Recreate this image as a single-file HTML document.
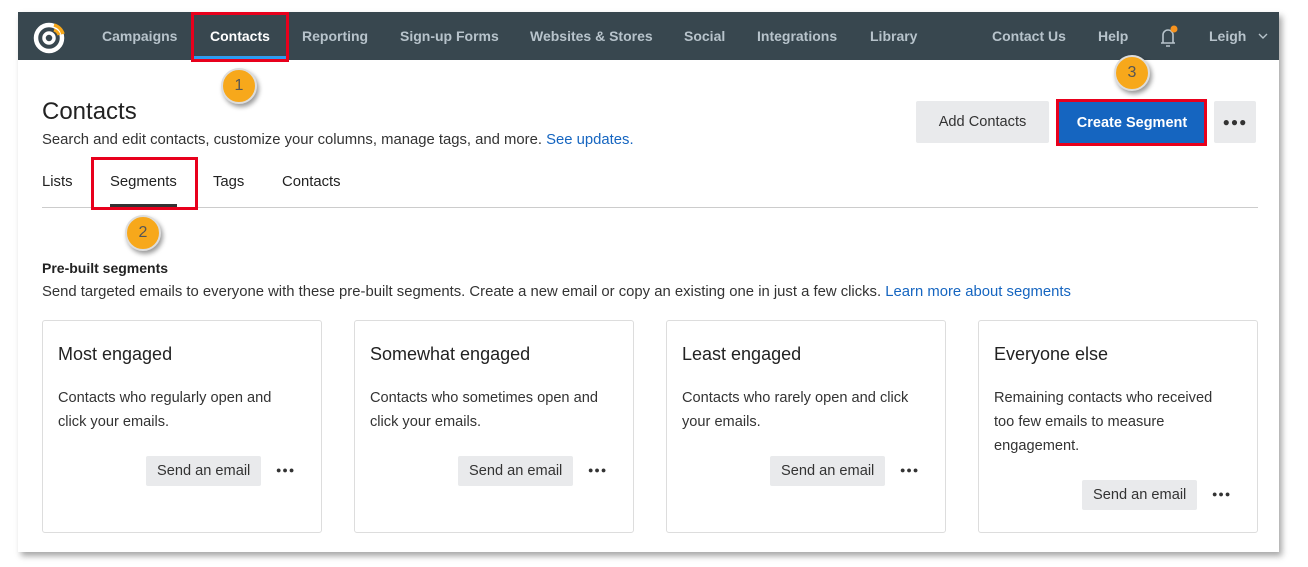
<!DOCTYPE html><html><head><style>
*{box-sizing:border-box;margin:0;padding:0}
body{width:1308px;height:567px;background:#fff;font-family:"Liberation Sans",Arial,sans-serif;position:relative;overflow:hidden;color:#222}
.page{position:absolute;left:18px;top:12px;width:1261px;height:540px;background:#fff;box-shadow:3px 4px 6px rgba(0,0,0,.35)}
.nav{position:absolute;left:0;top:0;width:1261px;height:48px;background:#38474f}
.nav span{position:absolute;top:16px;font-size:14px;color:#b7c3cb;font-weight:bold}
.abs{position:absolute}
.badge{position:absolute;width:36px;height:36px;border-radius:50%;background:#f7a81b;border:2px solid #ddd;box-shadow:2px 3px 5px rgba(0,0,0,.4);color:#555;font-size:16px;text-align:center;line-height:32px}
.red{position:absolute;border:3px solid #e8001c}
.card{position:absolute;top:308px;width:280px;height:213px;border:1px solid #ddd;border-radius:3px}
.card h3{position:absolute;left:15px;top:23px;font-size:18px;font-weight:normal;color:#222}
.card p{position:absolute;left:15px;top:65px;width:240px;font-size:14.6px;line-height:24px;color:#333}
.btn{position:absolute;background:#e9eaec;font-size:14.6px;color:#333;padding:0 11px;height:30px;line-height:30px;border-radius:2px}
.dots{position:absolute;font-size:9px;font-weight:bold;color:#333;letter-spacing:1px}
.t{font-size:14.85px}
</style></head><body>
<div class="page">
<div class="nav">
<svg class="abs" style="left:15px;top:8px" width="36" height="34" viewBox="0 0 36 34"><circle cx="16" cy="18" r="13" fill="none" stroke="#fff" stroke-width="4.5"/><circle cx="16" cy="18" r="5" fill="none" stroke="#fff" stroke-width="3.5"/><path d="M21 5a13 13 0 0 1 9 9" stroke="#f7a81b" stroke-width="3.5" fill="none"/><path d="M21 10a8 8 0 0 1 5 5" stroke="#f7a81b" stroke-width="3" fill="none"/></svg>
<span style="left:84px">Campaigns</span>
<span style="left:192px;color:#fff">Contacts</span>
<div class="abs" style="left:176px;top:44px;width:92px;height:4px;background:#2d9cf0"></div>
<span style="left:284px">Reporting</span>
<span style="left:382px">Sign-up Forms</span>
<span style="left:512px">Websites &amp; Stores</span>
<span style="left:666px">Social</span>
<span style="left:739px">Integrations</span>
<span style="left:852px">Library</span>
<span style="left:974px">Contact Us</span>
<span style="left:1080px">Help</span>
<svg class="abs" style="left:1141px;top:12px" width="20" height="24" viewBox="0 0 20 24"><path d="M4 19V11a5 5 0 0 1 10 0v8M2 19h14M7 22h4" stroke="#b7c3cb" stroke-width="1.6" fill="none"/><circle cx="15" cy="5" r="3.5" fill="#f7931e"/></svg>
<span style="left:1191px">Leigh</span>
<svg class="abs" style="left:1240px;top:21px" width="10" height="7" viewBox="0 0 10 7"><path d="M1 1l4 4 4-4" stroke="#b7c3cb" stroke-width="1.4" fill="none"/></svg>
</div>
<div class="red" style="left:173px;top:0;width:98px;height:50px"></div>
<div class="badge" style="left:203px;top:56px">1</div>
<div class="abs" style="left:24px;top:86px;font-size:24px;color:#222">Contacts</div>
<div class="abs t" style="left:24px;top:120px;color:#333">Search and edit contacts, customize your columns, manage tags, and more. <span style="color:#1565c0">See updates.</span></div>
<div class="btn" style="left:898px;top:89px;height:42px;line-height:42px;padding:0;text-align:center;width:133px">Add Contacts</div>
<div class="abs" style="left:1041px;top:90px;width:146px;height:42px;background:#1565c0;color:#fff;font-weight:bold;font-size:14.5px;text-align:center;line-height:42px">Create Segment</div>
<div class="red" style="left:1038px;top:87px;width:151px;height:47px"></div>
<div class="badge" style="left:1096px;top:43px">3</div>
<div class="btn" style="left:1196px;top:89px;width:42px;height:42px;line-height:42px;text-align:center;font-weight:bold;font-size:12px;padding:0;letter-spacing:1px">●●●</div>
<div class="abs t" style="left:24px;top:162px">Lists</div>
<div class="abs t" style="left:92px;top:162px">Segments</div>
<div class="abs" style="left:92px;top:192px;width:67px;height:3px;background:#333"></div>
<div class="abs t" style="left:195px;top:162px">Tags</div>
<div class="abs t" style="left:264px;top:162px">Contacts</div>
<div class="abs" style="left:24px;top:195px;width:1216px;height:1px;background:#ccc"></div>
<div class="red" style="left:73px;top:145px;width:107px;height:53px"></div>
<div class="badge" style="left:107px;top:203px">2</div>
<div class="abs" style="left:24px;top:248px;font-size:14px;font-weight:bold">Pre-built segments</div>
<div class="abs t" style="left:24px;top:272px;color:#333">Send targeted emails to everyone with these pre-built segments. Create a new email or copy an existing one in just a few clicks. <span style="color:#1565c0">Learn more about segments</span></div>
<div class="card" style="left:24px"><h3>Most engaged</h3><p>Contacts who regularly open and click your emails.</p><div class="btn" style="left:103px;top:135px">Send an email</div><div class="dots" style="left:233px;top:144px">●●●</div></div>
<div class="card" style="left:336px"><h3>Somewhat engaged</h3><p>Contacts who sometimes open and click your emails.</p><div class="btn" style="left:103px;top:135px">Send an email</div><div class="dots" style="left:233px;top:144px">●●●</div></div>
<div class="card" style="left:648px"><h3>Least engaged</h3><p>Contacts who rarely open and click your emails.</p><div class="btn" style="left:103px;top:135px">Send an email</div><div class="dots" style="left:233px;top:144px">●●●</div></div>
<div class="card" style="left:960px"><h3>Everyone else</h3><p style="width:232px">Remaining contacts who received too few emails to measure engagement.</p><div class="btn" style="left:103px;top:159px">Send an email</div><div class="dots" style="left:233px;top:168px">●●●</div></div>
</div>
</body></html>
